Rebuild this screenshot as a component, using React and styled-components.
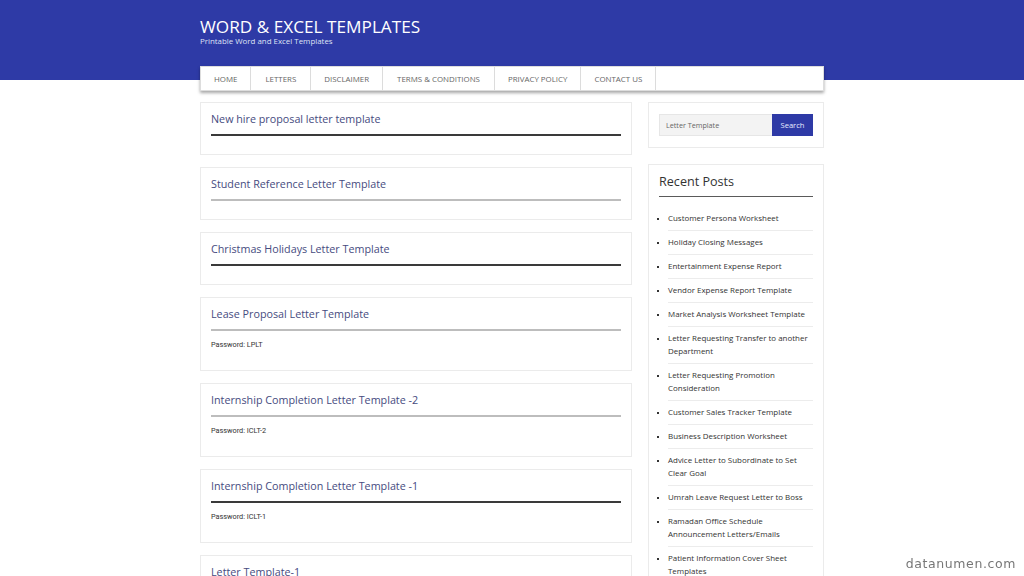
import React from 'react';
import styled, { createGlobalStyle } from 'styled-components';

const GlobalStyle = createGlobalStyle`
  * { box-sizing: border-box; }
  body {
    margin: 0;
    background: #fff;
    font-family: 'Open Sans', 'Liberation Sans', sans-serif;
    color: #333;
  }
`;

const Header = styled.header`
  height: 80px;
  background: #2e3aa6;
`;

const Container = styled.div`
  width: 624px;
  margin: 0 auto;
`;

const Branding = styled.div`
  padding-top: 17px;
  height: 66px;
  color: #fff;
`;

const SiteTitle = styled.h1`
  margin: 0;
  font-size: 17.2px;
  font-weight: 400;
  line-height: 20px;
`;

const Tagline = styled.p`
  margin: 0;
  font-size: 7.9px;
  line-height: 9px;
  color: #dfe2f5;
`;

const Nav = styled.nav`
  display: flex;
  height: 25px;
  background: #fff;
  border: 1px solid #ddd;
  box-shadow: 0 2px 3px rgba(0, 0, 0, 0.35);
`;

const NavItem = styled.a`
  display: flex;
  align-items: center;
  padding: 0 ${(p) => p.pad || 13}px;
  border-right: 1px solid #dcdcdc;
  font-size: 7.9px;
  color: #666;
  text-transform: uppercase;
  text-decoration: none;
`;

const Main = styled.div`
  display: grid;
  grid-template-columns: 432px 176px;
  gap: 16px;
  margin-top: 22px;
`;

const Posts = styled.div`
  display: flex;
  flex-direction: column;
  gap: 12px;
`;

const Card = styled.article`
  border: 1px solid #ebebeb;
  padding: 7px 10px 18px;
  background: #fff;
`;

const PostTitle = styled.h2`
  margin: 0;
  padding-bottom: 6px;
  font-size: 10.75px;
  font-weight: 400;
  line-height: 18px;
  color: #464b80;
  border-bottom: 2px solid ${(p) => (p.light ? '#bdbdbd' : '#3a3a3a')};
`;

const Password = styled.p`
  margin: 8.5px 0 2.5px;
  font-family: Roboto, 'Liberation Sans', sans-serif;
  font-size: 7.3px;
  line-height: 10px;
  color: #333;
`;

const Sidebar = styled.aside`
  display: flex;
  flex-direction: column;
  gap: 16px;
`;

const Widget = styled.section`
  border: 1px solid #ebebeb;
  padding: ${(p) => p.pad || '11px 10px'};
`;

const SearchForm = styled.form`
  display: flex;
  height: 22px;
`;

const SearchInput = styled.div`
  flex: 1;
  display: flex;
  align-items: center;
  padding: 0 6px;
  background: #f3f3f3;
  border: 1px solid #e6e6e6;
  border-right: none;
  font-size: 7.2px;
  color: #666;
`;

const SearchButton = styled.button`
  width: 41px;
  border: none;
  background: #2e3aa6;
  color: #e8eaff;
  font-family: 'Open Sans', sans-serif;
  font-size: 7.6px;
  padding: 0;
`;

const WidgetTitle = styled.h3`
  margin: 0;
  padding-bottom: 6px;
  font-size: 12.6px;
  font-weight: 400;
  line-height: 17px;
  color: #333;
  border-bottom: 1.5px solid #5a5a5a;
`;

const PostList = styled.ul`
  margin: 10px 0 0;
  padding: 0 0 0 9px;
  list-style: square;
`;

const PostLink = styled.li`
  padding: 5px 0;
  font-size: 7.95px;
  line-height: 13px;
  color: #333;
  border-bottom: 1px solid #ececec;

  &::marker {
    font-size: 6px;
  }
`;

const Watermark = styled.div`
  position: fixed;
  right: 8px;
  bottom: 5px;
  font-family: 'DejaVu Sans', sans-serif;
  font-size: 12.5px;
  letter-spacing: 0.6px;
  color: #777;
`;

const navItems = [
  ['Home', 13],
  ['Letters', 14],
  ['Disclaimer', 13],
  ['Terms & Conditions', 14],
  ['Privacy Policy', 13],
  ['Contact Us', 13],
];

const posts = [
  { title: 'New hire proposal letter template' },
  { title: 'Student Reference Letter Template', light: true },
  { title: 'Christmas Holidays Letter Template' },
  { title: 'Lease Proposal Letter Template', light: true, password: 'LPLT' },
  { title: 'Internship Completion Letter Template -2', light: true, password: 'ICLT-2' },
  { title: 'Internship Completion Letter Template -1', password: 'ICLT-1' },
  { title: 'Letter Template-1' },
];

const recent = [
  'Customer Persona Worksheet',
  'Holiday Closing Messages',
  'Entertainment Expense Report',
  'Vendor Expense Report Template',
  'Market Analysis Worksheet Template',
  'Letter Requesting Transfer to another Department',
  'Letter Requesting Promotion Consideration',
  'Customer Sales Tracker Template',
  'Business Description Worksheet',
  'Advice Letter to Subordinate to Set Clear Goal',
  'Umrah Leave Request Letter to Boss',
  'Ramadan Office Schedule Announcement Letters/Emails',
  'Patient Information Cover Sheet Templates',
  'Sales Forecast Worksheet',
];

export default function App() {
  return (
    <>
      <GlobalStyle />
      <Header>
        <Container>
          <Branding>
            <SiteTitle>WORD &amp; EXCEL TEMPLATES</SiteTitle>
            <Tagline>Printable Word and Excel Templates</Tagline>
          </Branding>
          <Nav>
            {navItems.map(([label, pad]) => (
              <NavItem key={label} href="#" pad={pad}>
                {label}
              </NavItem>
            ))}
          </Nav>
        </Container>
      </Header>
      <Container>
        <Main>
          <Posts>
            {posts.map((post) => (
              <Card key={post.title}>
                <PostTitle light={post.light}>{post.title}</PostTitle>
                {post.password && <Password>Password: {post.password}</Password>}
              </Card>
            ))}
          </Posts>
          <Sidebar>
            <Widget>
              <SearchForm onSubmit={(e) => e.preventDefault()}>
                <SearchInput>Letter Template</SearchInput>
                <SearchButton type="submit">Search</SearchButton>
              </SearchForm>
            </Widget>
            <Widget pad="8px 10px 11px">
              <WidgetTitle>Recent Posts</WidgetTitle>
              <PostList>
                {recent.map((item) => (
                  <PostLink key={item}>{item}</PostLink>
                ))}
              </PostList>
            </Widget>
          </Sidebar>
        </Main>
      </Container>
      <Watermark>datanumen.com</Watermark>
    </>
  );
}
